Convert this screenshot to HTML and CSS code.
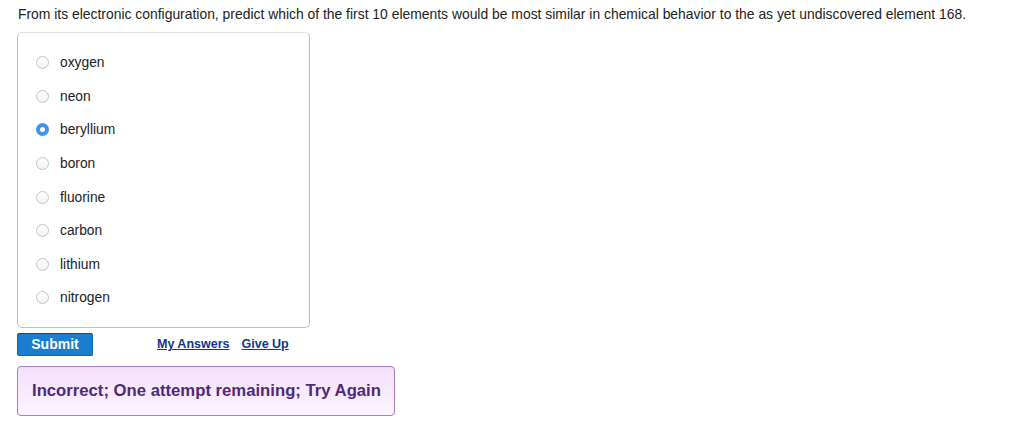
FILE: index.html
```html
<!DOCTYPE html>
<html lang="en">

<head>
    <meta charset="UTF-8">
    <title>Question</title>
    <link rel="stylesheet" href="styles.css">
</head>

<body>
    <div class="page">
        <p class="question">From its electronic configuration, predict which of the first 10 elements would be most similar in chemical behavior to the as yet undiscovered element 168.</p>

        <div class="choices">
            <label class="choice"><span class="radio"></span>oxygen</label>
            <label class="choice"><span class="radio"></span>neon</label>
            <label class="choice"><span class="radio checked"></span>beryllium</label>
            <label class="choice"><span class="radio"></span>boron</label>
            <label class="choice"><span class="radio"></span>fluorine</label>
            <label class="choice"><span class="radio"></span>carbon</label>
            <label class="choice"><span class="radio"></span>lithium</label>
            <label class="choice"><span class="radio"></span>nitrogen</label>
        </div>

        <div class="actions">
            <button class="submit">Submit</button>
            <a class="link" href="#">My Answers</a>
            <a class="link" href="#">Give Up</a>
        </div>

        <div class="feedback">Incorrect; One attempt remaining; Try Again</div>
    </div>
</body>

</html>
```

FILE: styles.css
```css
* {
    box-sizing: border-box;
}

body {
    margin: 0;
    font-family: "Liberation Sans", Arial, sans-serif;
    color: #222;
    background: #fff;
}

.page {
    padding: 6px 17px 0 17px;
}

.question {
    margin: 0 0 10px 1px;
    font-size: 13.9px;
    line-height: 16px;
}

.choices {
    width: 293px;
    padding: 13px 0 12px 18px;
    border: 1px solid #bdbdbd;
    border-top-color: #e0e0e0;
    border-radius: 5px;
}

.choice {
    display: flex;
    align-items: center;
    height: 33.6px;
    font-size: 13.8px;
    color: #222;
}

.radio {
    width: 13px;
    height: 13px;
    margin-right: 11px;
    border: 1px solid #c4c4c4;
    border-radius: 50%;
    background: linear-gradient(#fff, #f2f2f2);
}

.radio.checked {
    border: 4px solid #3b92f0;
    background: #fff;
}

.actions {
    display: flex;
    align-items: center;
    margin-top: 5px;
}

.submit {
    width: 76px;
    height: 23px;
    padding: 0;
    border: 1px solid #0d66b0;
    border-top-color: #0a4f8c;
    border-radius: 2px;
    background: #1a7dcf;
    color: #fff;
    font-family: "Liberation Sans", Arial, sans-serif;
    font-size: 14px;
    font-weight: bold;
}

.link {
    margin-left: 12px;
    font-size: 12.5px;
    font-weight: bold;
    color: #10388a;
}

.submit + .link {
    margin-left: 64px;
}

.feedback {
    width: 378px;
    height: 50px;
    margin-top: 10px;
    padding: 14px 0 0 14px;
    border: 1px solid #a97cc0;
    border-radius: 4px;
    background: linear-gradient(#f3dffc, #fdf4ff);
    color: #4e2a78;
    font-size: 16.7px;
    font-weight: bold;
}
```
